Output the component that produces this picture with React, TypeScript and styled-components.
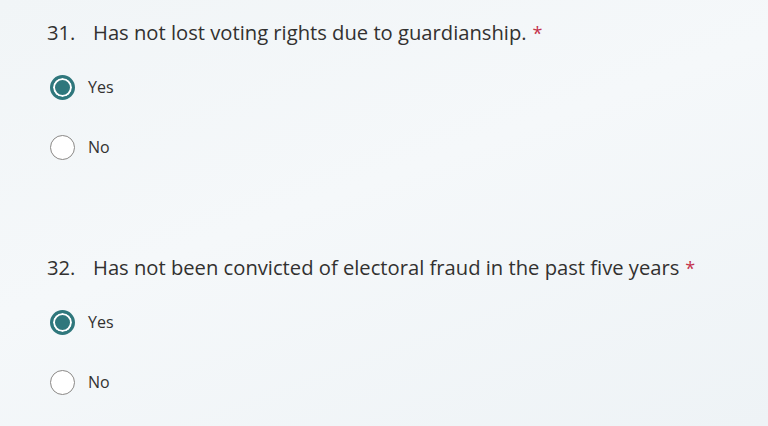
import React from "react";
import styled, { createGlobalStyle } from "styled-components";

const Global = createGlobalStyle`
  html, body { margin: 0; padding: 0; }
  body {
    width: 768px;
    height: 426px;
    overflow: hidden;
    background: linear-gradient(160deg, #f1f5f7 0%, #f5f8fa 45%, #eef3f6 100%);
    font-family: "Open Sans", "Noto Sans", sans-serif;
    color: #323130;
  }
`;

const Page = styled.main`
  display: flex;
  flex-direction: column;
  gap: 93px;
  padding: 17px 0 0 47px;
`;

const Question = styled.section`
  display: flex;
  flex-direction: column;
`;

const Title = styled.h2`
  margin: 0;
  display: flex;
  align-items: baseline;
  font-size: 20.2px;
  font-weight: 400;
  line-height: 30px;
  color: #323130;
`;

const Number = styled.span`
  width: 46px;
  flex: none;
`;

const Required = styled.span`
  color: #c4314b;
  margin-left: 6px;
  font-size: 18px;
`;

const Options = styled.div`
  display: flex;
  flex-direction: column;
  gap: 36px;
  margin-top: 27px;
`;

const Option = styled.label`
  display: flex;
  align-items: center;
  gap: 13px;
  height: 24px;
  padding-left: 3px;
  font-size: 16px;
  color: #323130;
`;

const Radio = styled.span<{ $checked: boolean }>`
  box-sizing: border-box;
  width: 25px;
  height: 25px;
  border-radius: 50%;
  flex: none;
  ${({ $checked }) =>
    $checked
      ? `background: #2f777c; border: 3px solid #2f777c; box-shadow: inset 0 0 0 2px #ffffff;`
      : `background: #ffffff; border: 1.5px solid #8a8886;`}
`;

type Q = { num: string; text: string; answer: string };

const questions: Q[] = [
  { num: "31.", text: "Has not lost voting rights due to guardianship.", answer: "Yes" },
  { num: "32.", text: "Has not been convicted of electoral fraud in the past five years", answer: "Yes" },
];

export default function App() {
  return (
    <>
      <Global />
      <Page>
        {questions.map((q) => (
          <Question key={q.num}>
            <Title>
              <Number>{q.num}</Number>
              <span>{q.text}</span>
              <Required>*</Required>
            </Title>
            <Options>
              {["Yes", "No"].map((o) => (
                <Option key={o}>
                  <Radio $checked={o === q.answer} />
                  <span>{o}</span>
                </Option>
              ))}
            </Options>
          </Question>
        ))}
      </Page>
    </>
  );
}
